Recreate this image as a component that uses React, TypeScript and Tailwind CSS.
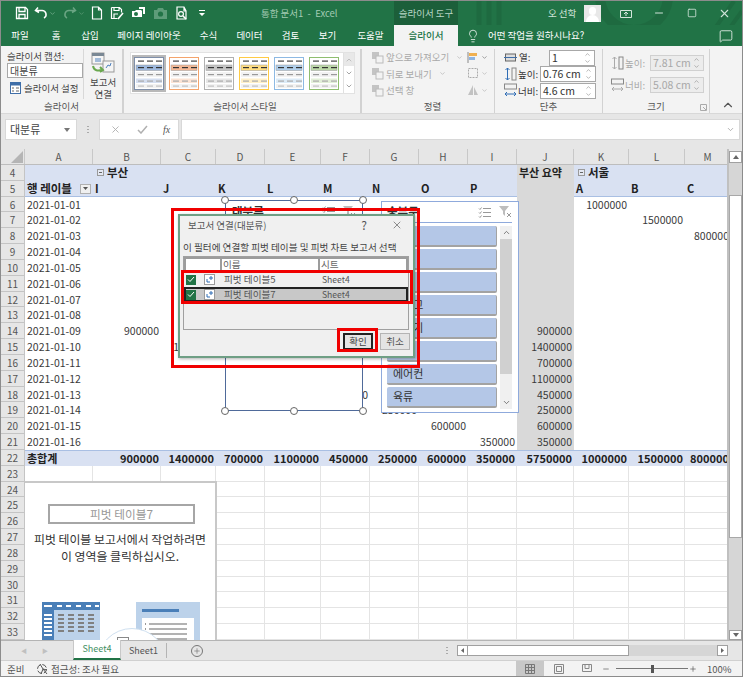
import type { ReactNode } from "react"
import { ChevronDown, ChevronUp, Lightbulb, MessageSquare, Minus, Plus, Square, X } from "lucide-react"

const font = "font-['Noto_Sans_CJK_KR','Noto_Sans',sans-serif]"

// spreadsheet data, one entry per row, keyed by column letter
const columns = ["A", "B", "C", "D", "E", "F", "G", "H", "I", "J", "K", "L", "M"]
const dates = [
  "2021-01-01", "2021-01-02", "2021-01-03", "2021-01-04", "2021-01-05", "2021-01-06", "2021-01-07", "2021-01-08",
  "2021-01-09", "2021-01-10", "2021-01-11", "2021-01-12", "2021-01-13", "2021-01-14", "2021-01-15", "2021-01-16",
]
const dataRows: Record<number, Record<string, string>> = {
  6: { K: "1000000" },
  7: { L: "1500000" },
  8: { M: "800000" },
  14: { B: "900000", J: "900000" },
  15: { C: "1400000", J: "1400000" },
  16: { D: "700000", J: "700000" },
  17: { E: "1100000", J: "1100000" },
  18: { F: "450000", J: "450000" },
  19: { G: "250000", J: "250000" },
  20: { H: "600000", J: "600000" },
  21: { I: "350000", J: "350000" },
}
const totals: Record<string, string> = {
  B: "900000", C: "1400000", D: "700000", E: "1100000", F: "450000", G: "250000",
  H: "600000", I: "350000", J: "5750000", K: "1000000", L: "1500000", M: "800000",
}
const row5Letters: Record<string, string> = {
  B: "I", C: "J", D: "K", E: "L", F: "M", G: "N", H: "O", I: "P", K: "A", L: "B", M: "C",
}

const sheetGrid = "grid grid-cols-[24px_68px_68px_55px_49px_56px_49px_49px_49px_49px_57px_55px_56px_46px]"
const rowH = "h-[15.83px]"

const thumbs = [
  { border: "#7f8fa9", head: "#9db8de", tint: "#d4def0" },
  { border: "#f4a46c", head: "#f4b894", tint: "#fbe3d4" },
  { border: "#b0b0b0", head: "#c4c4c4", tint: "#e6e6e6" },
  { border: "#ffcb45", head: "#ffdd80", tint: "#fff0c8" },
  { border: "#8db9e3", head: "#b0cfec", tint: "#dcebf7" },
  { border: "#8fbe6f", head: "#bcd8a8", tint: "#e2efd8" },
]

function StyleThumb({ border, head, tint }: { border: string; head: string; tint: string }) {
  const dashes = (y: number, color: string) =>
    [4, 13, 22].map((x) => <rect key={x} x={x} y={y} width="6" height="1.2" fill={color} />)
  return (
    <svg width="30" height="33" viewBox="0 0 30 33" className="shrink-0">
      <rect x="0.5" y="0.5" width="29" height="32" fill="#fff" stroke={border} />
      {dashes(3.5, "#404040")}
      <rect x="2" y="8" width="26" height="5.5" fill={head} stroke="#999" strokeWidth="0.5" />
      {dashes(10, "#333")}
      <rect x="2" y="15" width="26" height="5" fill="#f2f2f2" />
      {dashes(17, "#999")}
      <rect x="2" y="21.5" width="26" height="4.5" fill={tint} />
      {dashes(23.5, "#aaa")}
      <rect x="2" y="27" width="26" height="4" fill="#f2f2f2" />
      {dashes(28.5, "#c0c0c0")}
    </svg>
  )
}

function RibbonGroup({ label, className, children }: { label: string; className: string; children: ReactNode }) {
  return (
    <div className={`flex flex-col border-r border-[#d2d2d2] mt-[3px] ${className}`}>
      <div className="flex-1 min-h-0">{children}</div>
      <div className="h-[13px] text-center text-[9.5px] leading-[12px] text-[#555]">{label}</div>
    </div>
  )
}

function Spin({ value, className, muted }: { value: string; className: string; muted?: boolean }) {
  return (
    <div
      className={`flex items-center border h-[16px] text-[10.5px] pl-[2px] ${className} ${
        muted ? "border-[#d0d0d0] bg-[#ececec] text-[#a8a8a8]" : "border-[#a8a8a8] bg-white text-[#333]"
      }`}
    >
      <span className="flex-1">{value}</span>
      <span className="flex flex-col w-[10px] text-[#888]">
        <ChevronUp size={7} />
        <ChevronDown size={7} />
      </span>
    </div>
  )
}

function SizeIcon({ color, wide }: { color: string; wide?: boolean }) {
  return wide ? (
    <svg width="13" height="15" viewBox="0 0 13 15" className="shrink-0">
      <rect x="0.5" y="1" width="12" height="5" fill="none" stroke="#888" />
      <path d="M1 11h11M1 11l2-2M1 11l2 2M12 11l-2-2M12 11l-2 2" fill="none" stroke={color} />
    </svg>
  ) : (
    <svg width="13" height="15" viewBox="0 0 13 15" className="shrink-0">
      <rect x="8" y="1" width="4" height="12" fill="none" stroke="#888" />
      <path d="M3.5 1v12M3.5 1l-2 2M3.5 1l2 2M3.5 13l-2-2M3.5 13l2-2" fill="none" stroke={color} />
    </svg>
  )
}

function ArrangeRow({ label, caret }: { label: string; caret?: boolean }) {
  return (
    <div className="flex items-center h-[16.5px] text-[9.5px] text-[#a9a9a9] whitespace-nowrap">
      <svg width="13" height="13" viewBox="0 0 13 13" className="mr-[2px] shrink-0">
        <rect x="1" y="1" width="7" height="7" fill="#c4c4c4" />
        <rect x="5" y="5" width="7" height="7" fill="#f3f3f3" stroke="#bbb" />
      </svg>
      <span>{label}</span>
      {caret && <ChevronDown size={7} className="ml-[7px]" />}
    </div>
  )
}

function TitleIcons() {
  return (
    <div className="flex items-center text-white">
      <svg width="14" height="14" viewBox="0 0 14 14" className="ml-[14px]" fill="none" stroke="#fff" strokeWidth="1.3">
        <path d="M1.5 1.5h9l2 2v9h-11z" />
        <path d="M4 1.5v4h6v-4M4 12.5v-4h6v4" />
      </svg>
      <svg width="14" height="14" viewBox="0 0 14 14" className="ml-[5px]" fill="none" stroke="#fff" strokeWidth="1.5">
        <path d="M4 1.5L1.5 4.5 5 6.5M2 4.5h6a4 4 0 0 1 2 7.5" />
      </svg>
      <ChevronDown size={7} className="ml-[1px] text-[#8fbfa3]" />
      <svg width="14" height="14" viewBox="0 0 14 14" className="ml-[7px]" fill="none" stroke="#6aa583" strokeWidth="1.5">
        <path d="M10 1.5L12.5 4.5 9 6.5M12 4.5H6a4 4 0 0 0-2 7.5" />
      </svg>
      <ChevronDown size={7} className="ml-[1px] text-[#6aa583]" />
      <svg width="12" height="14" viewBox="0 0 12 14" className="ml-[6px]" fill="none" stroke="#fff" strokeWidth="1.2">
        <path d="M1.5 1h6l3 3v9h-9zM7.5 1v3h3" />
      </svg>
      <svg width="15" height="14" viewBox="0 0 15 14" className="ml-[7px]" fill="none" stroke="#fff" strokeWidth="1.2">
        <path d="M1.5 1.5h8l2 2v3M1.5 1.5v11h6M4 1.5v3h5v-3M4 12v-4h4" />
        <path d="M8 13l5-6" strokeWidth="1.6" />
      </svg>
      <svg width="16" height="14" viewBox="0 0 16 14" className="ml-[6px]" fill="#fff">
        <path d="M1 5h3l1-1h5l1 1v6H1z" />
        <circle cx="5" cy="8" r="2" fill="#217346" />
        <path d="M8 1h6v7h-2V3H8z" />
      </svg>
      <svg width="15" height="13" viewBox="0 0 15 13" className="ml-[6px]" fill="#5d9c79">
        <path d="M1 3h3l1-2h5l1 2h3v9H1z" />
        <circle cx="7.5" cy="7" r="2.6" fill="#217346" />
      </svg>
      <svg width="14" height="15" viewBox="0 0 14 15" className="ml-[7px]" fill="none" stroke="#fff" strokeWidth="1.2">
        <path d="M9 1H2v12h9V5zM9 1v4h2" />
        <circle cx="6" cy="8" r="2.4" />
        <path d="M8 10l3 3" strokeWidth="1.6" />
      </svg>
      <svg width="8" height="8" viewBox="0 0 8 8" className="ml-[9px]" fill="#fff">
        <path d="M1 1h6v1H1zM1 4h6L4 7z" />
      </svg>
    </div>
  )
}

function TitleBar() {
  return (
    <div className="relative flex items-stretch h-[24px] bg-[#217346] overflow-hidden">
      {/* background pattern of the title bar */}
      <svg className="absolute right-0 top-0" width="300" height="46" viewBox="0 0 300 46" fill="none" stroke="#1e6a40">
        <path d="M37 0v46M47 0v46M57 0v46" strokeWidth="5" />
        <circle cx="192" cy="-5" r="34" strokeWidth="10" />
        <path d="M260 46L292 0M274 46L300 10" strokeWidth="4" />
      </svg>
      <div className="relative flex items-center w-[393px]">
        <TitleIcons />
        <span className="ml-[55px] text-[9.5px] text-[#a3cbb4] whitespace-pre">{"통합 문서1  -  Excel"}</span>
      </div>
      <div className="relative w-[64px] bg-[#1c5f3a] flex items-center justify-center text-[9.5px] text-[#b8d6c5] whitespace-nowrap">
        슬라이서 도구
      </div>
      <div className="relative flex items-center flex-1 text-[#cfe3d8]">
        <span className="ml-[90px] text-[9.5px] whitespace-nowrap">오 선학</span>
        <div className="ml-[8px] w-[17px] h-[17px] bg-[#e8e8e8] relative overflow-hidden">
          <div className="absolute left-[5px] top-[2px] w-[7px] h-[8px] rounded-full bg-white" />
          <div className="absolute left-[2px] top-[10px] w-[13px] h-[8px] rounded-t-full bg-white" />
        </div>
        <svg width="12" height="10" viewBox="0 0 12 10" className="ml-[19px]" fill="none" stroke="#d5e6dc">
          <path d="M.5 2.5h11v7H.5zM6 8V4M4 6l2-2 2 2" />
        </svg>
        <Minus size={12} className="ml-[21px]" />
        <Square size={10} className="ml-[22px]" />
        <X size={13} className="ml-[21px]" />
      </div>
    </div>
  )
}

function TabRow() {
  const tabs: [string, string][] = [
    ["파일", "w-[38px]"], ["홈", "w-[34px]"], ["삽입", "w-[34px]"], ["페이지 레이아웃", "w-[84px]"], ["수식", "w-[35px]"],
    ["데이터", "w-[47px]"], ["검토", "w-[35px]"], ["보기", "w-[39px]"], ["도움말", "w-[47px]"],
  ]
  return (
    <div className="flex items-stretch h-[21px] bg-[#217346] text-[9.5px] text-white">
      {tabs.map(([label, w]) => (
        <span key={label} className={`flex items-center justify-center whitespace-nowrap ${w}`}>
          {label}
        </span>
      ))}
      <span className="flex items-center justify-center w-[64px] bg-[#f3f3f3] text-[#217346] font-medium">슬라이서</span>
      <Lightbulb size={14} strokeWidth={1.3} className="ml-[8px] self-center" />
      <span className="ml-[8px] w-[225px] self-center whitespace-nowrap">어떤 작업을 원하시나요?</span>
      <MessageSquare size={14} strokeWidth={1.3} className="ml-[6px] self-center" />
    </div>
  )
}

function Ribbon() {
  return (
    <div className="flex h-[67px] bg-[#f3f3f3] text-[#444] text-[9.5px]">
      <RibbonGroup label="슬라이서" className="w-[123px] border-r-2">
        <div className="flex">
          <div className="w-[84px] pl-[6px] border-r border-[#d8d8d8] h-[50px]">
            <div className="leading-[14px] whitespace-nowrap">슬라이서 캡션:</div>
            <div className="w-[76px] h-[15px] bg-white border border-[#a8a8a8] text-[10px] leading-[13px] pl-[2px]">대분류</div>
            <div className="flex items-center mt-[3px] ml-[3px]">
              <svg width="11" height="12" viewBox="0 0 11 12" className="mr-[3px] shrink-0">
                <rect x="0.5" y="0.5" width="10" height="11" fill="#fff" stroke="#3f6ea8" />
                <rect x="0.5" y="0.5" width="10" height="3" fill="#3f6ea8" />
                <path d="M2 6h2M6 6h3M2 9h2M6 9h3" stroke="#666" />
              </svg>
              <span className="whitespace-nowrap">슬라이서 설정</span>
            </div>
          </div>
          <div className="flex flex-col items-center w-[38px] pt-[3px]">
            <svg width="24" height="22" viewBox="0 0 24 22">
              <rect x="1" y="1" width="12" height="11" fill="#f5f5f5" stroke="#999" />
              <rect x="1" y="1" width="12" height="3" fill="#7a8894" />
              <path d="M4 7h6M4 9h6" stroke="#4f81bd" />
              <rect x="12" y="9" width="11" height="11" fill="#f5f5f5" stroke="#999" />
              <path d="M15 16l2-3 2 1 1-3" stroke="#4f81bd" fill="none" />
              <path d="M2 14c1 5 5 5 9 4M9 15l3 3-3 2" stroke="#6aa84f" strokeWidth="2" fill="none" />
            </svg>
            <span className="text-center mt-[2px] leading-[12px]">
              보고서
              <br />
              연결
            </span>
          </div>
        </div>
      </RibbonGroup>

      <RibbonGroup label="슬라이서 스타일" className="w-[238px] pl-[6px] border-r-2">
        <div className="flex items-center h-[42px] w-[225px] mt-[3px] bg-white pl-[3px] border border-[#e2e2e2]">
          <div className="flex gap-[5px] flex-1 items-center">
            {thumbs.map((t, i) => (
              <div key={t.border} className={i === 0 ? "bg-[#b9b9b9] p-[2px] -mx-[2px]" : ""}>
                <StyleThumb {...t} />
              </div>
            ))}
          </div>
          <div className="flex flex-col w-[11px] h-full border-l border-[#e0e0e0] text-[#777]">
            <div className="flex-1 bg-[#e8e8e8] flex items-center justify-center"><ChevronUp size={8} className="text-[#aaa]" /></div>
            <div className="flex-1 flex items-center justify-center"><ChevronDown size={8} /></div>
            <div className="flex-1 flex items-center justify-center"><ChevronDown size={8} /></div>
          </div>
        </div>
      </RibbonGroup>

      <RibbonGroup label="정렬" className="w-[133px] pl-[9px]">
        <div className="flex">
          <div className="w-[96px]">
            <ArrangeRow label="앞으로 가져오기" caret />
            <ArrangeRow label="뒤로 보내기" caret />
            <ArrangeRow label="선택 창" />
          </div>
          <div className="flex flex-col text-[#aaa]">
            <div className="flex items-center h-[16.5px]">
              <svg width="12" height="13" viewBox="0 0 12 13">
                <path d="M1 1v11" stroke="#888" />
                <rect x="2" y="2" width="8" height="3" fill="#f0b050" />
                <rect x="2" y="6" width="6" height="3" fill="#8db4e2" />
              </svg>
              <ChevronDown size={7} className="ml-[2px] text-[#666]" />
            </div>
            <div className="flex items-center h-[16.5px]">
              <svg width="12" height="13" viewBox="0 0 12 13">
                <rect x="1.5" y="1.5" width="9" height="9" fill="none" stroke="#aaa" strokeDasharray="2 1" />
              </svg>
              <ChevronDown size={7} className="ml-[2px]" />
            </div>
            <div className="flex items-center h-[16.5px]">
              <svg width="12" height="13" viewBox="0 0 12 13">
                <path d="M6 1L1 11h5zM7 3l4 8H7z" fill="#c2c2c2" />
              </svg>
              <ChevronDown size={7} className="ml-[2px]" />
            </div>
          </div>
        </div>
      </RibbonGroup>

      <RibbonGroup label="단추" className="w-[108px]">
        <div className="flex flex-col pl-[9px]">
          <div className="flex items-center h-[17px]">
            <svg width="13" height="9" viewBox="0 0 13 9" className="shrink-0">
              <rect x="1.5" y="1" width="10" height="7" fill="#ddd" stroke="#666" />
              <path d="M0 4.5h13" stroke="#3f6ea8" />
            </svg>
            <span className="ml-[2px] w-[30px] text-[#333]">열:</span>
            <Spin value="1" className="w-[46px]" />
          </div>
          <div className="flex items-center h-[16.5px]">
            <SizeIcon color="#2f6db5" />
            <span className="w-[22px] ml-[1px] text-[#333] whitespace-nowrap">높이:</span>
            <Spin value="0.76 cm" className="w-[56px]" />
          </div>
          <div className="flex items-center h-[16.5px]">
            <SizeIcon color="#2f6db5" wide />
            <span className="w-[22px] ml-[1px] text-[#333] whitespace-nowrap">너비:</span>
            <Spin value="4.6 cm" className="w-[56px]" />
          </div>
        </div>
      </RibbonGroup>

      <RibbonGroup label="크기" className="w-[107px] relative">
        <div className="flex flex-col pl-[8px] pt-[6px] gap-[6px] text-[#a8a8a8]">
          <div className="flex items-center">
            <SizeIcon color="#aaa" />
            <span className="ml-[1px] w-[25px] whitespace-nowrap">높이:</span>
            <Spin value="7.81 cm" muted className="w-[54px]" />
          </div>
          <div className="flex items-center">
            <SizeIcon color="#aaa" wide />
            <span className="ml-[1px] w-[25px] whitespace-nowrap">너비:</span>
            <Spin value="5.08 cm" muted className="w-[54px]" />
          </div>
        </div>
        <svg width="7" height="7" viewBox="0 0 7 7" className="absolute right-[2px] bottom-[2px]" fill="none" stroke="#aaa">
          <path d="M.5.5h6v6h-6zM3 3l3 3" />
        </svg>
      </RibbonGroup>

      <div className="flex-1 flex items-end justify-center pb-[1px] pl-[3px]">
        <ChevronUp size={14} className="text-[#555]" />
      </div>
    </div>
  )
}

function FormulaBar() {
  return (
    <div className="flex items-center h-[36px] bg-[#e6e6e6] border-t border-[#d8d8d8] pl-[4px] pb-[4px]">
      <div className="flex items-center justify-between w-[72px] h-[21px] bg-white border border-[#d8d8d8] pl-[4px] pr-[6px] text-[11px] text-[#444]">
        대분류
        <svg width="6" height="4" viewBox="0 0 6 4" fill="#777"><path d="M0 0h6L3 4z" /></svg>
      </div>
      <div className="w-[22px] flex flex-col items-center gap-[2px]">
        <i className="w-[2px] h-[1px] bg-[#aaa]" />
        <i className="w-[2px] h-[1px] bg-[#aaa]" />
        <i className="w-[2px] h-[1px] bg-[#aaa]" />
      </div>
      <div className="flex items-center w-[80px] h-[21px] bg-white border border-[#d8d8d8] text-[#b0b0b0]">
        <X size={11} className="ml-[10px]" />
        <svg width="11" height="9" viewBox="0 0 11 9" className="ml-[16px]" fill="none" stroke="#b0b0b0" strokeWidth="1.5"><path d="M1 5l3 3 6-7" /></svg>
        <span className="ml-[15px] text-[10px] italic font-['Liberation_Serif',serif] text-[#555]">fx</span>
      </div>
      <div className="flex items-center justify-end w-[559px] h-[21px] ml-[2px] bg-white border border-[#d8d8d8] pr-[4px]">
        <ChevronDown size={9} className="text-[#999]" />
      </div>
    </div>
  )
}

function Toggle({ label }: { label: string }) {
  return (
    <span className="flex items-center ml-[2px] font-bold text-[11.5px]">
      <span className="flex items-center justify-center w-[7px] h-[7px] mr-[3px] border border-[#9a9a9a] bg-[#e4e8f2]">
        <i className="block w-[3px] h-px bg-[#666]" />
      </span>
      {label}
    </span>
  )
}

function SheetRow({ n }: { n: number }) {
  const cellText = "px-[2px] leading-[15.83px] whitespace-nowrap overflow-hidden"
  const head = (
    <div className={`${rowH} bg-[#e6e6e6] border-r border-b border-[#c4c4c4] text-center text-[10px] leading-[15px] text-[#555]`}>{n}</div>
  )

  if (n === 4 || n === 5 || n === 22) {
    return (
      <div className={`${sheetGrid} ${rowH}`}>
        {head}
        {columns.map((c) => {
          const band = c === "J" && n !== 22 ? "bg-[#d9d9d9]" : "bg-[#d9e1f2]"
          const edge = n === 5 && c !== "J" ? "border-b border-[#a9bfe3]" : n === 22 ? "border-t border-[#a9bfe3]" : ""
          let body: ReactNode = null
          if (n === 4 && c === "B") body = <Toggle label="부산" />
          if (n === 4 && c === "J") body = <span className="font-bold">부산 요약</span>
          if (n === 4 && c === "K") body = <Toggle label="서울" />
          if (n === 5 && c === "A") {
            body = (
              <span className="flex items-center justify-between font-bold text-[11.5px]">
                행 레이블
                <span className="flex items-center justify-center w-[11px] h-[10px] bg-[#f0f0f0] border border-[#b0b0b0]">
                  <svg width="5" height="3" viewBox="0 0 5 3" fill="#555"><path d="M0 0h5L2.5 3z" /></svg>
                </span>
              </span>
            )
          }
          if (n === 5 && row5Letters[c]) body = <span className="font-bold">{row5Letters[c]}</span>
          if (n === 22 && c === "A") body = <span className="font-bold">총합계</span>
          if (n === 22 && totals[c]) body = <span className="block text-right font-bold">{totals[c]}</span>
          return (
            <div key={c} className={`${band} ${edge} ${cellText} text-[11px] text-[#222]`}>
              {body}
            </div>
          )
        })}
      </div>
    )
  }

  if (n <= 21) {
    const values = dataRows[n] ?? {}
    return (
      <div className={`${sheetGrid} ${rowH} bg-white`}>
        {head}
        {columns.map((c) => (
          <div key={c} className={`${cellText} text-[10.5px] text-[#3a3a3a] ${c === "J" ? "bg-[#d9d9d9]" : ""} ${c === "A" ? "" : "text-right"}`}>
            {c === "A" ? dates[n - 6] : values[c]}
          </div>
        ))}
      </div>
    )
  }

  return (
    <div className={`${sheetGrid} ${rowH} bg-white`}>
      {head}
      {columns.map((c) => (
        <div key={c} className="border-r border-b border-[#e4e4e4]" />
      ))}
    </div>
  )
}

function SlicerButton({ label }: { label: string }) {
  return (
    <div className="h-[21px] pl-[6px] rounded-[2px] bg-[#b4c7e7] border-b-2 border-r border-[#a3a3a3] text-[11px] leading-[19px] text-[#333]">
      {label}
    </div>
  )
}

function Handle({ className }: { className: string }) {
  return <div className={`absolute w-[8px] h-[8px] rounded-full bg-white border-[1.5px] border-[#666] ${className}`} />
}

function SlicerTools() {
  return (
    <span className="flex items-center gap-[8px]">
      <svg width="13" height="11" viewBox="0 0 13 11" fill="none" stroke="#999">
        <path d="M5 1.5h8M5 5.5h8M5 9.5h8M1 1.5l1 1 1.5-2M1 5.5l1 1 1.5-2M1 9.5l1 1 1.5-2" />
      </svg>
      <svg width="13" height="12" viewBox="0 0 13 12">
        <path d="M0 0h10L6 5v5L4 8V5z" fill="#bdbdbd" />
        <path d="M8 7l4 4M12 7l-4 4" stroke="#999" />
      </svg>
    </span>
  )
}

function Slicers() {
  return (
    <>
      <div className="absolute left-[224px] top-[35px] w-[138px] h-[211px] bg-white border border-[#4f6a9a] px-[6px]">
        <div className="flex items-center justify-between h-[21px] text-[11.5px] font-bold text-[#333]">
          대분류
          <SlicerTools />
        </div>
        <Handle className="-left-[5px] -top-[5px]" />
        <Handle className="left-[64px] -top-[5px]" />
        <Handle className="-right-[5px] -top-[5px]" />
        <Handle className="-left-[5px] -bottom-[5px]" />
        <Handle className="left-[64px] -bottom-[5px]" />
        <Handle className="-right-[5px] -bottom-[5px]" />
      </div>
      <div className="absolute left-[380px] top-[36px] w-[138px] h-[212px] bg-white border border-[#8faadc] pl-[5px] pr-[6px]">
        <div className="flex items-center justify-between h-[21px] border-b border-[#8faadc] text-[11.5px] font-bold text-[#333]">
          숭부두
          <SlicerTools />
        </div>
        <div className="flex gap-[3px] mt-[3px]">
          <div className="flex flex-col gap-[2px] w-[110px]">
            {["", "", "", "냉장고", "세탁기", "", "에어컨", "육류"].map((t, i) => (
              <SlicerButton key={i} label={t} />
            ))}
          </div>
          <div className="flex flex-col items-center w-[12px] h-[183px] bg-[#f0f0f0] text-[#555]">
            <ChevronUp size={9} className="mt-[2px]" />
            <div className="w-full h-[135px] mt-[2px] bg-[#d0d0d0]" />
            <ChevronDown size={9} className="mt-auto mb-[2px]" />
          </div>
        </div>
      </div>
    </>
  )
}

function ConnectionIcon() {
  return (
    <svg width="11" height="11" viewBox="0 0 11 11">
      <rect x="0.5" y="0.5" width="10" height="10" fill="#fff" stroke="#9a9a9a" />
      <path d="M3 8V5M3 8h3M7 2v4M5 4h4" stroke="#2f6db5" fill="none" />
    </svg>
  )
}

function CheckMark() {
  return (
    <span className="flex items-center justify-center w-[10px] h-[10px] bg-[#217346]">
      <svg width="8" height="7" viewBox="0 0 8 7" fill="none" stroke="#fff"><path d="M1 3.5l2 2 4-4.5" /></svg>
    </span>
  )
}

function DialogRow({ name, selected }: { name: string; selected?: boolean }) {
  return (
    <div className={`flex items-center h-[15px] text-[9.6px] text-[#555] ${selected ? "bg-[#c8c8c8] border-2 border-[#222]" : ""}`}>
      <span className={selected ? "" : "ml-[2px]"}><CheckMark /></span>
      <span className="ml-[8px]"><ConnectionIcon /></span>
      <span className="ml-[9px] w-[98px] whitespace-nowrap">{name}</span>
      <span className="text-[8.6px]">Sheet4</span>
    </div>
  )
}

function Dialog() {
  return (
    <div className="absolute left-[177px] top-[49px] w-[237px] h-[144px] bg-[#f0f0f0] border-2 border-[#6f9f85] shadow-[1px_1px_3px_rgba(0,0,0,0.3)] px-[3px]">
      <div className="flex items-center h-[18px] pl-[5px] text-[9.5px] text-[#555]">
        <span className="flex-1">보고서 연결(대분류)</span>
        <span className="text-[12px] mr-[24px]">?</span>
        <X size={12} strokeWidth={1.3} className="mr-[7px]" />
      </div>
      <div className="mt-[6px] h-[16px] text-[9.6px] leading-[14px] text-[#444] whitespace-nowrap">이 필터에 연결할 피벗 테이블 및 피벗 차트 보고서 선택</div>
      <div className="w-[226px] h-[74px] border border-[#a0a0a0] bg-[#f0f0f0]">
        <div className="flex h-[15px] bg-white border-2 border-[#9c9c9c] text-[9.6px] leading-[11px] text-[#666]">
          <span className="w-[36px] border-r-2 border-[#9c9c9c]" />
          <span className="w-[98px] pl-[1px] border-r-2 border-[#9c9c9c]">이름</span>
          <span className="pl-[1px]">시트</span>
        </div>
        <DialogRow name="피벗 테이블5" />
        <DialogRow name="피벗 테이블7" selected />
      </div>
      <div className="flex justify-end gap-[7px] mt-[3px]">
        <div className="flex items-center justify-center w-[30px] h-[17px] bg-[#e4e4e4] border-2 border-[#222] text-[9.6px] text-[#444]">확인</div>
        <div className="flex items-center justify-center w-[30px] h-[17px] bg-[#e4e4e4] border border-[#b4b4b4] text-[9.6px] text-[#555]">취소</div>
      </div>
    </div>
  )
}

function PivotPlaceholder() {
  return (
    <div className="absolute left-[24px] top-[316px] w-[192px] h-[160px] bg-white border-t-2 border-r-2 border-[#c8c8c8] overflow-hidden">
      <div className="mt-[21px] ml-[23px] w-[147px] h-[20px] border-2 border-[#a6a6a6] text-center text-[11.7px] leading-[16px] text-[#999]">피벗 테이블7</div>
      <div className="mt-[6px] text-center text-[11.9px] leading-[17px] text-[#333] whitespace-nowrap">
        피벗 테이블 보고서에서 작업하려면
        <br />이 영역을 클릭하십시오.
      </div>
      <div className="flex mt-[38px] ml-[17px]">
        <svg width="58" height="40" viewBox="0 0 58 40">
          <rect width="58" height="40" fill="#bcd2ea" />
          <rect width="58" height="8" fill="#4a7fb8" />
          <rect width="12" height="40" fill="#4a7fb8" />
          <path d="M15 4h5M24 4h5M34 4h5M44 4h5M53 4h4M2 4h8M2 13h8M2 17h8M2 21h8M2 25h8M2 29h8M2 33h8" stroke="#fff" strokeWidth="2" />
          <path d="M16 13h6M26 13h6M36 13h6M46 13h6M16 17h6M26 17h6M36 17h6M46 17h6M16 21h6M26 21h6M36 21h6M46 21h6M16 25h6M26 25h6M36 25h6M46 25h6M16 29h6M26 29h6M36 29h6M46 29h6" stroke="#808080" strokeWidth="2" />
        </svg>
        <svg width="64" height="40" viewBox="0 0 64 40" className="ml-[36px]">
          <rect width="64" height="40" fill="#bcd2ea" />
          <rect x="6" y="7" width="37" height="3" fill="#4a7fb8" />
          <rect x="6" y="16" width="52" height="24" fill="#fff" />
          <path d="M13 22h38M13 27h38M13 32h38M13 37h38" stroke="#999" strokeWidth="1.3" />
          <path d="M9 22h1M9 27h1M9 32h1M9 37h1" stroke="#777" strokeWidth="1.3" />
        </svg>
      </div>
      <div className="absolute left-[72px] top-[145px] w-[70px] h-[70px] rounded-full bg-white border border-[#cfe0f0]" />
      <div className="absolute left-[92px] top-[154px] w-[12px] h-[12px] bg-white border border-[#888]" />
    </div>
  )
}

function Sheet() {
  const rows = Array.from({ length: 30 }, (_, i) => i + 4)
  return (
    <div className="flex h-[491px] bg-[#e6e6e6]">
      <div className="relative w-[728px] overflow-hidden border-r-2 border-[#c0c0c0]">
        <div className={`${sheetGrid} h-[16px] bg-[#e6e6e6] border-b border-[#bdbdbd] text-[10px] leading-[15px] text-[#555]`}>
          <div className="relative border-r border-[#c8c8c8]">
            <svg width="12" height="12" viewBox="0 0 12 12" className="absolute right-[1px] bottom-[1px]"><path d="M12 0v12H0z" fill="#b5b5b5" /></svg>
          </div>
          {columns.map((c) => (
            <div key={c} className="text-center border-r border-[#c8c8c8]">{c}</div>
          ))}
        </div>
        <div className="relative">
          {rows.map((n) => (
            <SheetRow key={n} n={n} />
          ))}
          <PivotPlaceholder />
          <Slicers />
          <Dialog />
          {/* red annotation boxes */}
          <div className="absolute left-[170px] top-[43px] w-[249px] h-[160px] border-[3px] border-[#f00000]" />
          <div className="absolute left-[180px] top-[105px] w-[232px] h-[34px] border-[3px] border-[#f00000]" />
          <div className="absolute left-[336px] top-[163px] w-[41px] h-[24px] border-[3px] border-[#f00000]" />
        </div>
      </div>
      <div className="flex flex-col w-[13px] mt-[2px] text-[#555]">
        <div className="flex items-center justify-center h-[12px] bg-white border border-[#a0a0a0]">
          <svg width="6" height="4" viewBox="0 0 6 4" fill="#666"><path d="M0 4h6L3 0z" /></svg>
        </div>
        <div className="flex-1 relative bg-[#d6d6d6]">
          <div className="absolute top-[32px] left-0 right-0 h-[343px] bg-white border border-[#a8a8a8]" />
        </div>
        <div className="flex items-center justify-center h-[10px] bg-white border border-[#a0a0a0]">
          <svg width="6" height="4" viewBox="0 0 6 4" fill="#666"><path d="M0 0h6L3 4z" /></svg>
        </div>
      </div>
    </div>
  )
}

function SheetTabs() {
  return (
    <div className="flex items-stretch h-[20px] bg-[#e6e6e6] border-t border-[#b4b4b4] text-[9px]">
      <div className="flex items-center w-[72px] pl-[20px] gap-[15px] text-[#c0c0c0]">
        <span className="text-[6px]">◀</span>
        <span className="text-[6px]">▶</span>
      </div>
      <div className="flex items-center justify-center w-[48px] -mt-px bg-white border-x border-b-2 border-x-[#c8c8c8] border-b-[#217346] text-[#3f8f63]">Sheet4</div>
      <div className="flex items-center justify-center w-[46px] border-r border-[#b4b4b4] my-[2px] text-[#555]">Sheet1</div>
      <div className="flex items-center ml-[24px] text-[#777]">
        <span className="flex items-center justify-center w-[12px] h-[12px] rounded-full border border-[#777]">
          <Plus size={8} />
        </span>
      </div>
      <div className="ml-[243px] flex flex-col justify-center gap-[2px]">
        <i className="w-[2px] h-[1px] bg-[#aaa]" />
        <i className="w-[2px] h-[1px] bg-[#aaa]" />
        <i className="w-[2px] h-[1px] bg-[#aaa]" />
      </div>
      <div className="flex items-center h-[11px] self-center ml-[9px] w-[271px] bg-[#d6d6d6]">
        <div className="flex items-center justify-center w-[11px] h-full bg-white border border-[#a0a0a0]">
          <svg width="3" height="5" viewBox="0 0 3 5" fill="#666"><path d="M3 0v5L0 2.5z" /></svg>
        </div>
        <div className="w-[161px] h-full bg-white border border-[#a0a0a0] border-l-0" />
        <div className="ml-auto flex items-center justify-center w-[11px] h-full bg-white border border-[#a0a0a0]">
          <svg width="3" height="5" viewBox="0 0 3 5" fill="#666"><path d="M0 0v5l3-2.5z" /></svg>
        </div>
      </div>
    </div>
  )
}

function StatusBar() {
  return (
    <div className="flex items-center h-[16px] bg-[#f3f3f3] border-t border-[#d0d0d0] pl-[6px] text-[9.5px] leading-[14px] text-[#555]">
      <span className="w-[29px] whitespace-nowrap">준비</span>
      <svg width="13" height="13" viewBox="0 0 13 13" fill="none" stroke="#555" className="shrink-0">
        <circle cx="6" cy="7" r="4.5" strokeDasharray="5 2" />
        <path d="M4 2l3 5 4 1M7 7l-2 5M7 7l4 5" />
      </svg>
      <span className="ml-[2px] w-[465px] whitespace-nowrap">접근성: 조사 필요</span>
      <div className="flex items-center justify-center w-[28px] h-[15px] bg-[#c8c8c8]">
        <svg width="10" height="10" viewBox="0 0 10 10" fill="none" stroke="#777">
          <path d="M.5.5h9v9h-9zM.5 3.5h9M.5 6.5h9M3.5.5v9M6.5.5v9" />
        </svg>
      </div>
      <svg width="10" height="10" viewBox="0 0 10 10" className="ml-[10px] shrink-0" fill="none" stroke="#888">
        <path d="M.5.5h9v9h-9zM2.5 2.5h5v5h-5z" />
      </svg>
      <svg width="10" height="10" viewBox="0 0 10 10" className="ml-[18px] shrink-0" fill="none" stroke="#888">
        <path d="M.5.5h9v7h-9zM3 .5v4h4v-4" />
      </svg>
      <Minus size={8} className="ml-[10px] shrink-0" />
      <div className="relative w-[72px] h-px ml-[6px] bg-[#777] shrink-0">
        <div className="absolute left-[35px] -top-[3.5px] w-[3px] h-[8px] bg-[#555]" />
      </div>
      <Plus size={8} className="ml-[1px] shrink-0" />
      <span className="ml-[10px] whitespace-nowrap">100%</span>
    </div>
  )
}

export default function App() {
  return (
    <div className={`w-[743px] h-[677px] overflow-hidden border border-[#8c8c8c] ${font}`}>
      <TitleBar />
      <TabRow />
      <Ribbon />
      <FormulaBar />
      <Sheet />
      <SheetTabs />
      <StatusBar />
    </div>
  )
}
